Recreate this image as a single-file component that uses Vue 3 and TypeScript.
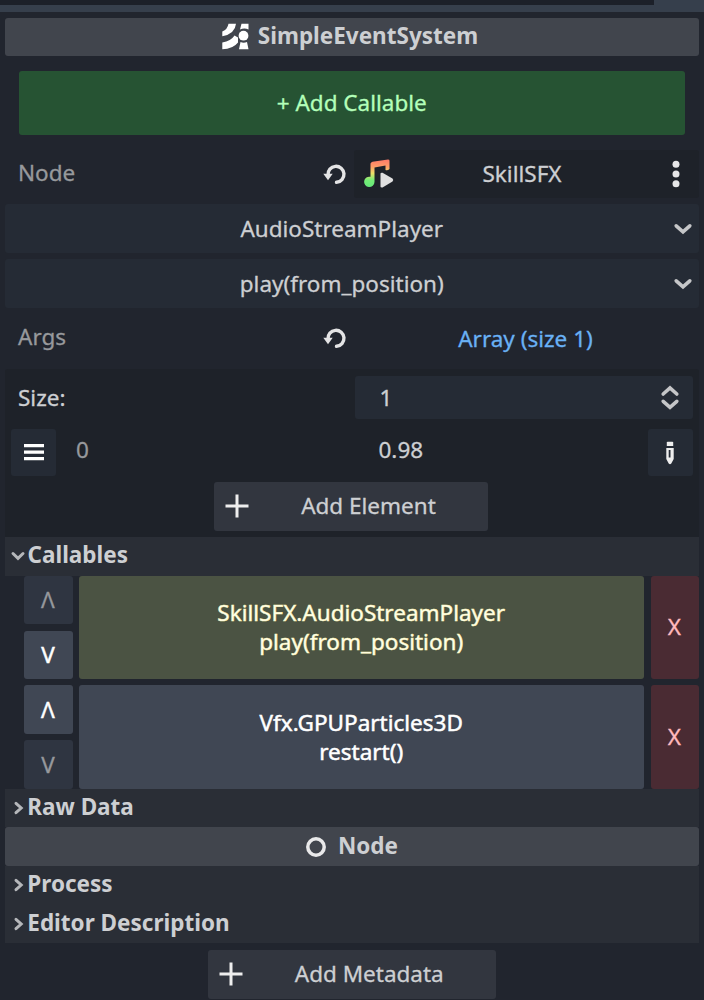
<script setup lang="ts">
interface CallableEntry {
  target: string
  method: string
  selected: boolean
  canMoveUp: boolean
  canMoveDown: boolean
}

const selectors: string[] = ['AudioStreamPlayer', 'play(from_position)']

const callables: CallableEntry[] = [
  { target: 'SkillSFX.AudioStreamPlayer', method: 'play(from_position)', selected: true, canMoveUp: false, canMoveDown: true },
  { target: 'Vfx.GPUParticles3D', method: 'restart()', selected: false, canMoveUp: true, canMoveDown: false },
]
</script>

<template>
  <main class="inspector">
    <div class="scroll-edge"><div class="scroll-track"></div></div>

    <header class="category first">
      <svg class="event-icon" width="27" height="27" viewBox="0 0 27 27">
        <path d="M.3 13.300V8.500Q5.500 6.500 6.500 .8H14Q13 11 .3 13.300Z" />
        <path d="M.3 26.300V19.500Q9 18 12.500 12.500L16 14.500V19.500Q11 26 .3 26.300Z" />
        <path d="M19.500 .8H26.500V6.500Q22.500 4.500 18 6.500Z" />
        <circle cx="21.500" cy="12.700" r="4.900" />
        <path d="M18.500 19Q21.500 20.500 25 19L26.500 26.300H17Z" />
      </svg>
      <span>SimpleEventSystem</span>
    </header>

    <button class="add-callable">+ Add Callable</button>

    <section class="property">
      <span class="name">Node</span>
      <svg class="revert" width="24" height="24" viewBox="0 0 24 24">
        <path class="arc" d="M5 12A8 8 0 1 1 13.500 19.300" />
        <path class="head" d="M.3 10.800H9.700L5 17.200Z" />
      </svg>
      <div class="node-picker">
        <svg class="audio-icon" width="30" height="30" viewBox="0 0 30 30">
          <defs>
            <linearGradient id="note" x1="0" y1="0" x2="0" y2="1">
              <stop offset="0" stop-color="#ff7a68" />
              <stop offset=".25" stop-color="#ff9b68" />
              <stop offset=".5" stop-color="#ecdf68" />
              <stop offset=".75" stop-color="#75ed76" />
              <stop offset="1" stop-color="#65e77a" />
            </linearGradient>
          </defs>
          <path fill="url(#note)" d="M6.500 4.500Q7 3.200 8.500 2.800L24 .5Q25.500 .5 25.500 1.800V10Q23.500 12 21.500 11V6.500L10.500 8.500V23A5.200 5.200 0 1 1 6.500 17.800Z" />
          <path class="play" d="M16.500 14.800Q16.500 13.500 18.500 13.800L28.500 19.500Q30 21 28.500 22.500L18.500 28.500Q16.500 28.800 16.500 27.500Z" />
        </svg>
        <span>SkillSFX</span>
        <svg class="kebab" width="8" height="28" viewBox="0 0 8 28">
          <circle cx="4" cy="4.300" r="3.500" /><circle cx="4" cy="14" r="3.500" /><circle cx="4" cy="23.700" r="3.500" />
        </svg>
      </div>
    </section>

    <button v-for="label in selectors" :key="label" class="dropdown">
      <span>{{ label }}</span>
      <svg width="18" height="12" viewBox="0 0 18 12"><path d="M2.200 2.800L9 8.900L15.800 2.800" /></svg>
    </button>

    <section class="property args">
      <span class="name">Args</span>
      <svg class="revert" width="24" height="24" viewBox="0 0 24 24">
        <path class="arc" d="M5 12A8 8 0 1 1 13.500 19.300" />
        <path class="head" d="M.3 10.800H9.700L5 17.200Z" />
      </svg>
      <div class="array-label">Array (size 1)</div>
    </section>

    <section class="array-panel">
      <div class="size-row">
        <span>Size:</span>
        <div class="spin">
          <span>1</span>
          <svg width="18" height="24" viewBox="0 0 18 24"><path d="M2.200 9L9 2.900L15.800 9M2.200 16.300L9 22.300L15.800 16.300" /></svg>
        </div>
      </div>
      <div class="element-row">
        <button class="square">
          <svg width="20" height="18" viewBox="0 0 20 18"><path d="M0 1.700H20M0 8.200H20M0 14.700H20" /></svg>
        </button>
        <span class="index">0</span>
        <span class="value">0.98</span>
        <button class="square">
          <svg class="pencil" width="8" height="24" viewBox="0 0 8 24">
            <path class="solid" d="M.8 5V1.500Q.8.800 1.600.800H6.400Q7.200.800 7.200 1.500V5Z" />
            <path class="solid" fill-rule="evenodd" d="M.3 7H7.700V18L5.300 22.500Q4 24 2.700 22.500L.3 18ZM2.700 9V16.500H4.500V9Z" />
          </svg>
        </button>
      </div>
      <button class="plus-button element">
        <svg width="24" height="24" viewBox="0 0 24 24"><path d="M12 .5V23.500M.5 12H23.500" /></svg>
        <span>Add Element</span>
      </button>
    </section>

    <div class="group open">
      <svg width="14" height="10" viewBox="0 0 14 10"><path d="M2 2.500L7 7.300L12 2.500" /></svg>
      <span>Callables</span>
    </div>

    <section class="callables">
      <div v-for="entry in callables" :key="entry.target" class="callable" :class="{ selected: entry.selected }">
        <div class="order">
          <button :disabled="!entry.canMoveUp"><span>Λ</span></button>
          <button :disabled="!entry.canMoveDown"><span>V</span></button>
        </div>
        <button class="body"><span>{{ entry.target }}</span><span>{{ entry.method }}</span></button>
        <button class="remove"><span>X</span></button>
      </div>
    </section>

    <div class="group">
      <svg width="10" height="14" viewBox="0 0 10 14"><path d="M2 2.300L7.200 7L2 11.700" /></svg>
      <span>Raw Data</span>
    </div>

    <header class="category">
      <svg class="node-icon" width="20" height="20" viewBox="0 0 20 20"><circle cx="10" cy="10" r="8.200" /></svg>
      <span>Node</span>
    </header>

    <div v-for="title in ['Process', 'Editor Description']" :key="title" class="group">
      <svg width="10" height="14" viewBox="0 0 10 14"><path d="M2 2.300L7.200 7L2 11.700" /></svg>
      <span>{{ title }}</span>
    </div>

    <button class="plus-button metadata">
      <svg width="24" height="24" viewBox="0 0 24 24"><path d="M12 .5V23.500M.5 12H23.500" /></svg>
      <span>Add Metadata</span>
    </button>
  </main>
</template>

<style>
body { margin: 0; background: #21252e; }
</style>

<style scoped>
* { box-sizing: border-box; }
.inspector {
  width: 704px; height: 1000px; overflow: hidden; padding: 0 5px;
  display: flex; flex-direction: column;
  background: #21252e; color: #cdcfd2;
  font: 22.5px/29px "Noto Sans", sans-serif;
  -webkit-text-stroke: .3px currentColor;
}
.inspector > * { flex-shrink: 0; }
button {
  border: 0; padding: 0; margin: 0; color: inherit; font: inherit;
  display: flex; align-items: center; justify-content: center;
}
svg { display: block; flex: none; overflow: visible; }
.scroll-edge { height: 11.500px; margin: 0 -5px; background: #363f4c; }
.scroll-track { width: 654px; height: 4.500px; background: #1c2029; }

.category {
  height: 38.700px; display: flex; align-items: center; justify-content: center;
  background: #41454d; border-radius: 3px; font-weight: 700; -webkit-text-stroke-width: 0;
}
.category.first { margin-top: 6px; gap: 9px; padding-right: 4px; }
.category.first span { position: relative; top: -1px; }
.category:not(.first) { gap: 12px; }
.category:not(.first) span { position: relative; top: -1px; }
.event-icon { fill: #fff; }
.node-icon { fill: none; stroke: #e9e9ea; stroke-width: 3.500; }

.add-callable {
  height: 64.500px; margin: 14.500px 14.500px 0 14px; border-radius: 3px;
  background: #265333; color: #b3ffb9;
}

.property { height: 48.500px; margin-top: 14.800px; display: flex; align-items: center; }
.property .name { width: 306px; padding-left: 13px; color: #97999c; position: relative; top: -2px; }
.revert { margin: 1px 7px 0 12px; }
.revert .arc { fill: none; stroke: #e4e4e5; stroke-width: 3.400; stroke-linecap: round; }
.revert .head { fill: #e4e4e5; }
.node-picker {
  flex: 1; align-self: stretch; display: flex; align-items: center;
  padding: 0 19px 0 10px; border-radius: 3px; background: #1e2229;
}
.node-picker span { flex: 1; text-align: center; padding-right: 22px; margin-top: -2px; }
.play { fill: #e0e0e0; }
.kebab { fill: #e6e6e7; }

.dropdown { height: 48.500px; margin-top: 6.300px; padding: 0 7px 0 0; background: #252b35; border-radius: 3px; }
.property + .dropdown { margin-top: 6px; }
.dropdown span { flex: 1; text-align: center; padding-left: 4.500px; }
.dropdown svg path, .spin svg path { fill: none; stroke: #c5c6c8; stroke-width: 3.600; stroke-linecap: round; }
.args { margin-top: 6px; }
.array-label { flex: 1; text-align: center; padding-right: 2px; color: #69b1f5; }

.array-panel { height: 168px; margin-top: 6.800px; padding: 6.500px 6px 0; background: #1e2229; border-radius: 3px 3px 0 0; }
.size-row { height: 43.500px; display: flex; align-items: center; padding-left: 7px; }
.spin {
  width: 338.500px; height: 43.500px; margin-left: auto; padding: 0 14px 0 25px;
  display: flex; align-items: center; justify-content: space-between;
  border-radius: 3px; background: #252b35;
}
.element-row { height: 47px; margin-top: 10px; display: flex; align-items: center; }
.square { width: 45px; height: 47px; border-radius: 3px; background: #252b35; }
.square path { stroke: #fff; stroke-width: 3.200; }
.square path.solid { fill: #eee; stroke: none; }
.pencil { margin-right: 1px; }
.index { width: 322px; padding-left: 20px; color: #97999c; position: relative; top: -3px; }
.value { flex: 1; padding-left: .5px; position: relative; top: -3px; }
.plus-button { height: 48.500px; border-radius: 3px; background: #32363f; justify-content: flex-start; }
.plus-button path { fill: none; stroke: #eee; stroke-width: 3; }
.plus-button svg { margin-top: -1px; }
.plus-button span { flex: 1; text-align: center; position: relative; top: -1px; }
.element { width: 274px; margin: 6px 0 0 203px; padding: 0 31px 0 11px; }
.element span { padding-left: 31px; }
.metadata { width: 288px; margin: 7px 0 0 203px; padding: 0 31px 0 10.500px; }
.metadata span { padding-left: 31px; top: -1.500px; }

.group {
  height: 38.700px; display: flex; align-items: center; padding-left: 8.800px; gap: 3.500px;
  background: #2a2e36; font-weight: 700; -webkit-text-stroke-width: 0;
}
.group path { fill: none; stroke: #b5b7ba; stroke-width: 3; stroke-linecap: round; }
.group span { position: relative; top: -2px; }
.callables + .group span { top: -1px; }
.group.open { padding-left: 5.500px; gap: 3px; }

.callables { display: flex; flex-direction: column; gap: 6.500px; padding-left: 19px; }
.callable { height: 103.200px; display: flex; gap: 6.500px; }
.order { width: 48.500px; display: flex; flex-direction: column; gap: 6.400px; }
.order button { flex: 1; border-radius: 3px; background: #404754; color: #fff; }
.order button:disabled { background: #2f3541; color: #96989c; }
.order span, .body span { position: relative; left: -.3px; }
.remove span { position: relative; top: -1px; left: -.5px; }
.body { flex: 1; flex-direction: column; border-radius: 3px; background: #404754; color: #fff; }
.order button:not(:disabled), .body { -webkit-text-stroke-width: .5px; }
.selected .body { background: #4b5343; color: #fffff0; -webkit-text-stroke-color: #fff8b8; }
.remove { width: 48.500px; border-radius: 3px; background: #4a2b33; color: #ffb9bd; }
</style>
